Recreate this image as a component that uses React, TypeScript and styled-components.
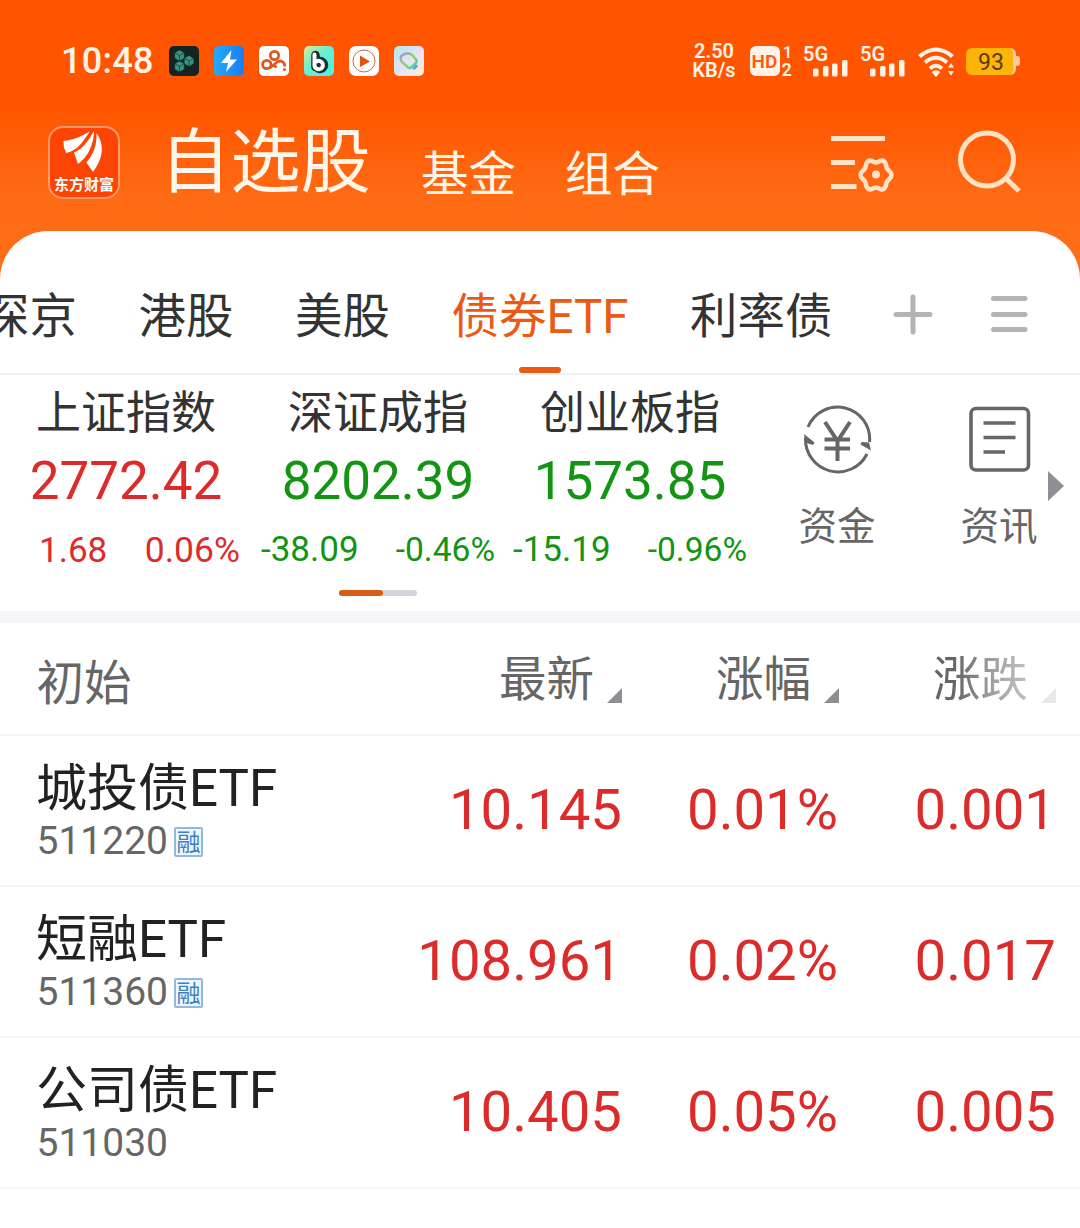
import React from "react";
import styled, { createGlobalStyle } from "styled-components";

const Global = createGlobalStyle`
  * { box-sizing: border-box; }
  body {
    margin: 0;
    background: #fff;
    font-family: Roboto, "Noto Sans CJK SC", sans-serif;
    color: #333;
  }
`;

const RED = "#dc2b2b";
const GREEN = "#139413";

const Screen = styled.div`
  width: 1080px;
  height: 1228px;
  overflow: hidden;
  background: linear-gradient(#ff5500 0, #ff5500 105px, #ff6b15 200px, #ff6e18 280px);
`;

/* ---------- status bar ---------- */

const StatusBar = styled.div`
  display: flex;
  justify-content: space-between;
  align-items: center;
  height: 96px;
  padding: 26px 60px 0 61px;
  color: #fff3e8;
`;

const StatusGroup = styled.div<{ $gap: number }>`
  display: flex;
  align-items: center;
  gap: ${(p) => p.$gap}px;
`;

const Clock = styled.span`
  width: 93px;
  font-size: 36px;
  line-height: 40px;
  font-weight: 500;
  letter-spacing: 0.3px;
`;

const Speed = styled.div`
  width: 44px;
  text-align: center;
  font-size: 20px;
  line-height: 19px;
  font-weight: 600;
  white-space: nowrap;
`;

const AppIcon = styled.svg`
  width: 30px;
  height: 30px;
  display: block;
`;

const Battery = styled.div`
  display: flex;
  align-items: center;
`;

const BatteryBody = styled.div`
  width: 50px;
  height: 27px;
  padding-left: 3px;
  border-radius: 6px;
  border-right: 3px solid #ffc9a0;
  background: #fbb408;
  color: #5b3c00;
  font-size: 23px;
  line-height: 29px;
  text-align: center;
`;

const BatteryTip = styled.div`
  width: 4px;
  height: 10px;
  border-radius: 0 3px 3px 0;
  background: #ffc9a0;
`;

/* ---------- title bar ---------- */

const TitleBar = styled.div`
  display: flex;
  align-items: flex-start;
  height: 135px;
  padding-left: 48px;
`;

const Logo = styled.div`
  width: 72px;
  height: 73px;
  margin-top: 30px;
  border: 2px solid #ff9a6c;
  border-radius: 15px;
  background: #fc4504;
  display: flex;
  flex-direction: column;
  align-items: center;
`;

const LogoName = styled.span`
  font-family: "Noto Sans CJK SC", sans-serif;
  font-weight: 700;
  font-size: 15px;
  line-height: 16px;
  color: #fff;
  white-space: nowrap;
`;

const TitleText = styled.span<{ $size: number; $left: number; $top: number }>`
  margin: ${(p) => p.$top}px 0 0 ${(p) => p.$left}px;
  font-size: ${(p) => p.$size}px;
  line-height: 80px;
  color: #fff6ea;
  white-space: nowrap;
`;

const TitleIcons = styled.div`
  display: flex;
  margin: 30px 0 0 auto;
  padding-right: 50px;
`;

/* ---------- white sheet ---------- */

const Sheet = styled.main`
  height: 997px;
  background: #fff;
  border-radius: 48px 48px 0 0;
  overflow: hidden;
`;

const Tabs = styled.nav`
  display: flex;
  height: 144px;
  padding-top: 55px;
  margin-left: -18px;
  border-bottom: 2px solid #f2f2f2;
`;

const Tab = styled.div<{ $active?: boolean }>`
  display: flex;
  flex-direction: column;
  align-items: center;
  justify-content: space-between;
  flex-shrink: 0;
  margin-right: 61.5px;
  font-size: 47.5px;
  line-height: 62px;
  white-space: nowrap;
  color: ${(p) => (p.$active ? "#ea5a12" : "#333")};
`;

const TabMark = styled.i`
  width: 42px;
  height: 6px;
  border-radius: 3px;
  background: #ea5a12;
`;

const TabTools = styled.svg`
  display: block;
  flex-shrink: 0;
  width: 140px;
  height: 60px;
  margin: -1px 0 0 -4.5px;
`;

const Quotes = styled.section`
  display: flex;
  height: 236px;
`;

const Indices = styled.div`
  width: 756px;
`;

const IndexRow = styled.div`
  display: flex;
`;

const IndexCell = styled.div`
  width: 252px;
  display: flex;
  flex-direction: column;
  align-items: center;
`;

const IndexName = styled.div`
  height: 72px;
  font-size: 45px;
  line-height: 77px;
`;

const IndexValue = styled.div<{ $color: string }>`
  height: 70px;
  font-size: 53px;
  line-height: 68px;
  color: ${(p) => p.$color};
`;

const Deltas = styled.div<{ $color: string; $up?: boolean }>`
  display: flex;
  justify-content: space-between;
  width: 252px;
  padding: ${(p) => (p.$up ? "1px 12px 0 39px" : "0 9px 0 9px")};
  font-size: 35px;
  line-height: 66px;
  height: 66px;
  color: ${(p) => p.$color};
`;

const Percent = styled.span<{ $up?: boolean }>`
  font-size: ${(p) => (p.$up ? 35.5 : 33.6)}px;
  line-height: 65px;
`;

const Pager = styled.div`
  width: 78px;
  height: 6px;
  margin: 7px auto 0;
  border-radius: 3px;
  background: #d2d6da;
`;

const PagerOn = styled.div`
  width: 44px;
  height: 6px;
  border-radius: 3px;
  background: #d85c16;
`;

const Shortcut = styled.div`
  width: 162px;
  display: flex;
  flex-direction: column;
  align-items: center;
  font-size: 38.5px;
  line-height: 50px;
  color: #666;
`;

const ShortcutIcon = styled.svg`
  display: block;
  width: 72px;
  height: 72px;
  margin: 29px 0 26px;
`;

const More = styled.svg`
  position: absolute;
  left: 1048px;
  top: 471px;
  width: 17px;
  height: 30px;
`;

const Band = styled.div`
  height: 12px;
  background: #f5f6fa;
`;

/* ---------- table ---------- */

const Row = styled.div<{ $height: number }>`
  display: grid;
  grid-template-columns: 324px 300px 216px 240px;
  height: ${(p) => p.$height}px;
  border-bottom: 2px solid #f5f5f5;
`;

const HeadFirst = styled.div`
  height: 111px;
  padding-left: 36.5px;
  font-size: 47.5px;
  line-height: 123px;
  color: #666;
`;

const Head = styled.div<{ $right: number; $fade?: boolean }>`
  display: flex;
  justify-content: flex-end;
  height: 111px;
  padding-right: ${(p) => p.$right}px;
  font-size: 47.5px;
  line-height: 115px;
  color: #666;
  ${(p) =>
    p.$fade &&
    "mask-image: linear-gradient(90deg, #000 115px, rgba(0,0,0,.6) 155px, rgba(0,0,0,.42) 185px, rgba(0,0,0,.2) 205px);"}
`;

const SortMark = styled.i`
  width: 0;
  height: 0;
  margin: 65px 0 0 13px;
  border-left: 15px solid transparent;
  border-bottom: 15px solid #8e8e93;
`;

const Security = styled.div`
  padding-left: 36px;
  padding-top: 22px;
`;

const Name = styled.div`
  font-size: 51px;
  line-height: 62px;
  height: 61px;
  color: #222;
`;

const CodeLine = styled.div`
  display: flex;
  align-items: center;
  height: 44px;
  padding-left: 0.5px;
  font-size: 39px;
  line-height: 44px;
  color: #666;
`;

const Badge = styled.span`
  width: 29px;
  height: 30px;
  margin: 1px 0 0 6px;
  border: 2px solid #94b8dc;
  border-radius: 2px;
  background: #eef7fd;
  color: #3f7fc0;
  font-size: 24px;
  line-height: 28px;
  display: flex;
  justify-content: center;
`;

const Figure = styled.div<{ $right?: number }>`
  padding-right: ${(p) => p.$right ?? 2}px;
  text-align: right;
  font-size: 56.3px;
  line-height: 149px;
  color: ${RED};
`;

const indices = [
  { name: "上证指数", value: "2772.42", delta: "1.68", pct: "0.06%", up: true },
  { name: "深证成指", value: "8202.39", delta: "-38.09", pct: "-0.46%", up: false },
  { name: "创业板指", value: "1573.85", delta: "-15.19", pct: "-0.96%", up: false },
];

const rows = [
  { name: "城投债ETF", code: "511220", margin: true, last: "10.145", pct: "0.01%", chg: "0.001" },
  { name: "短融ETF", code: "511360", margin: true, last: "108.961", pct: "0.02%", chg: "0.017" },
  { name: "公司债ETF", code: "511030", margin: false, last: "10.405", pct: "0.05%", chg: "0.005" },
];

const Hex = ({ x, y }: { x: number; y: number }) => (
  <g transform={`translate(${x} ${y})`} stroke="#14302b" strokeWidth=".7">
    <path d="M0-5.6 4.8-2.8V2.8L0 5.6-4.8 2.8V-2.8Z" fill="#3b9584" />
    <path d="M-4.8-2.8 0 0 4.8-2.8M0 0V5.6" fill="none" />
  </g>
);

function StatusApps() {
  return (
    <StatusGroup $gap={15}>
      <AppIcon viewBox="0 0 30 30">
        <rect width="30" height="30" rx="5" fill="#17231f" />
        <Hex x={10.5} y={9.5} />
        <Hex x={20} y={15} />
        <Hex x={10.5} y={20.5} />
      </AppIcon>
      <AppIcon viewBox="0 0 30 30">
        <defs>
          <linearGradient id="bolt">
            <stop stopColor="#25a9fa" />
            <stop offset="1" stopColor="#1a7df2" />
          </linearGradient>
        </defs>
        <rect width="30" height="30" rx="5" fill="url(#bolt)" />
        <path d="M17.5 4 7 17h7l-2 9L23 13.500h-7Z" fill="#fff" />
      </AppIcon>
      <AppIcon viewBox="0 0 30 30">
        <rect width="30" height="30" rx="5" fill="#fff" />
        <g fill="none" stroke="#e2571c" strokeWidth="2.800">
          <circle cx="15.500" cy="9.500" r="4.200" />
          <circle cx="7.800" cy="18.500" r="4.200" />
          <path d="M11 22 17.500 16.500Q21.500 13.500 24.500 16.500Q26 18 25.500 20.500M14.500 19l3 2.500" />
        </g>
        <circle cx="25.500" cy="23.500" r="1.500" fill="#e2571c" />
      </AppIcon>
      <AppIcon viewBox="0 0 30 30">
        <defs>
          <linearGradient id="mint" x2="1" y2="1">
            <stop stopColor="#d9ec9a" />
            <stop offset=".45" stopColor="#6beed0" />
            <stop offset="1" stopColor="#45f3ea" />
          </linearGradient>
        </defs>
        <rect width="30" height="30" rx="5" fill="url(#mint)" />
        <g fill="none" strokeLinecap="round" strokeLinejoin="round">
          <path d="M11.500 9V21M12 19a4 4 0 1 0 2-3.500" stroke="#16302f" strokeWidth="8.500" />
          <path d="M10.500 8.500V20M10.500 19a4.200 4.200 0 1 0 2-3.500" stroke="#fff" strokeWidth="4" />
        </g>
      </AppIcon>
      <AppIcon viewBox="0 0 30 30">
        <rect width="30" height="30" rx="7" fill="#fff" />
        <circle cx="15" cy="15" r="11" fill="none" stroke="#bd704a" strokeWidth="1" />
        <path d="M11 9.500 21 15.500 11 21Z" fill="#e8500f" />
      </AppIcon>
      <AppIcon viewBox="0 0 30 30">
        <defs>
          <linearGradient id="pastel" x2="1" y2="1">
            <stop stopColor="#a9ecec" />
            <stop offset=".5" stopColor="#e6e2f7" />
            <stop offset="1" stopColor="#fdf0d0" />
          </linearGradient>
          <linearGradient id="rainbow" y2="1">
            <stop stopColor="#b58be8" />
            <stop offset=".5" stopColor="#8fdc5a" />
            <stop offset="1" stopColor="#45c0d8" />
          </linearGradient>
        </defs>
        <rect width="30" height="30" rx="5" fill="url(#pastel)" />
        <path d="M9.500 8.500q5-2.500 8.500.5l4 4.500q1.500 2-.5 4l-4 3.500q-2 2-4 0l-6-5.500q-2.500-5 2-7Z" fill="none" stroke="url(#rainbow)" strokeWidth="2.500" />
        <path d="m20 22.500 2.500-2.500" stroke="#3db5c8" strokeWidth="2.500" strokeLinecap="round" />
      </AppIcon>
    </StatusGroup>
  );
}

const Network = styled.svg`
  display: block;
  width: 205px;
  height: 36px;
  margin: 0 12px 0 13px;
`;

const SvgText = styled.text<{ $size: number }>`
  font-family: Roboto, sans-serif;
  font-weight: 600;
  font-size: ${(p) => p.$size}px;
`;

const Signal = ({ x }: { x: number }) => (
  <g fill="#fff3e8">
    <SvgText $size={20} x={x} y="17.500">5G</SvgText>
    <rect x={x + 10} y="25.500" width="5.500" height="8" rx="1.500" />
    <rect x={x + 20} y="23" width="5.500" height="10.500" rx="1.500" />
    <rect x={x + 29} y="20.500" width="5.500" height="13" rx="1.500" />
    <rect x={x + 39} y="17" width="5.500" height="16.500" rx="1.500" />
  </g>
);

function NetworkIcons() {
  return (
    <Network viewBox="0 0 205 36" fill="#fff3e8">
      <rect x="1" y="3" width="30" height="30" rx="6" />
      <SvgText $size={19} x="2.500" y="25" fill="#ff5a08">HD</SvgText>
      <SvgText $size={16} x="34" y="14.500">1</SvgText>
      <SvgText $size={18} x="32.500" y="32.500">2</SvgText>
      <Signal x={54} />
      <Signal x={111} />
      <g fill="none" stroke="#fff3e8" strokeWidth="4">
        <path d="M170.500 13.500Q187 -.5 203.500 13.500" />
        <path d="M176 19.500Q187 10 198 19.500" />
        <path d="M181 25.500Q187 20 193 25.500" />
      </g>
      <path d="M182.500 29q4.500-3.500 9 0l-4.500 5ZM199 24.500l3-4.500 3 4.500ZM199 28h6l-3 4.500Z" />
    </Network>
  );
}

export default function App() {
  return (
    <Screen>
      <Global />
      <StatusBar>
        <StatusGroup $gap={15}>
          <Clock>10:48</Clock>
          <StatusApps />
        </StatusGroup>
        <StatusGroup $gap={0}>
          <Speed>2.50<br />KB/s</Speed>
          <NetworkIcons />
          <Battery>
            <BatteryBody>93</BatteryBody>
            <BatteryTip />
          </Battery>
        </StatusGroup>
      </StatusBar>

      <TitleBar>
        <Logo>
          <svg width="68" height="48" viewBox="0 0 68 48" fill="#fff">
            <path d="M40 3.500C29 9 24 12 13.500 13Q13 19 16 25C29 22 32 14 40 3.500Z" />
            <path d="M44 3C38 13 34 20 24 24.500L28 36C38 29 44 16 44 3Z" />
            <path d="M46.500 5C47 18 43 27 36.500 34.500L43 44C53 31 55 17 46.500 5Z" />
          </svg>
          <LogoName>东方财富</LogoName>
        </Logo>
        <TitleText $size={70.3} $left={40} $top={27}>自选股</TitleText>
        <TitleText $size={47.5} $left={50} $top={39}>基金</TitleText>
        <TitleText $size={47.5} $left={49} $top={39}>组合</TitleText>
        <TitleIcons>
          <svg width="200" height="80" viewBox="0 0 200 80" fill="none" stroke="#ffe2c6" strokeWidth="5">
            <path d="M1 12.500H55M1 36.500H25M1 60.500H26.500" />
            <path d="M39.500 34.500C42 34 43.500 36.500 46 36.500S50 34 52.500 34.500C57 36 55.500 40 57 42.500S61.500 45.500 61.500 49S58.500 53 57 55.500S57 62 52.500 63.500C50 64 48.500 61.500 46 61.500S42 64 39.500 63.500C35 62 36.500 58 35 55.500S30.500 52.500 30.500 49S33.500 45 35 42.500S35 36 39.500 34.500Z" strokeWidth="4.500" />
            <circle cx="46" cy="48.500" r="4" fill="#ffe2c6" stroke="none" />
            <circle cx="157" cy="33.500" r="26.500" />
            <path d="M176 52.500 189 65" />
          </svg>
        </TitleIcons>
      </TitleBar>

      <Sheet>
        <Tabs>
          <Tab>深京</Tab>
          <Tab>港股</Tab>
          <Tab>美股</Tab>
          <Tab $active>债券ETF<TabMark /></Tab>
          <Tab>利率债</Tab>
          <TabTools viewBox="0 0 140 60" stroke="#b3b3b3" strokeWidth="5" strokeLinecap="round">
            <path d="M6 29.500H40M23 12V47" />
            <path d="M103.500 13.500H135M103.500 29.500H135M103.500 44.500H135" />
          </TabTools>
        </Tabs>

        <Quotes>
          <Indices>
            <IndexRow>
              {indices.map((i) => (
                <IndexCell key={i.name}>
                  <IndexName>{i.name}</IndexName>
                  <IndexValue $color={i.up ? RED : GREEN}>{i.value}</IndexValue>
                  <Deltas $color={i.up ? RED : GREEN} $up={i.up}>
                    <span>{i.delta}</span>
                    <Percent $up={i.up}>{i.pct}</Percent>
                  </Deltas>
                </IndexCell>
              ))}
            </IndexRow>
            <Pager><PagerOn /></Pager>
          </Indices>
          <Shortcut>
            <ShortcutIcon viewBox="0 0 72 72" fill="none" stroke="#666" strokeWidth="3">
              <path d="M7 23A32 32 0 0 1 68.500 38" />
              <path d="M66 50A32.500 32.500 0 0 1 4.500 34" />
              <path d="M3 30 13.500 38.500 12 41 4 38.500ZM70 46.500 59.500 40.500 60.500 38 68 38.500Z" fill="#666" stroke="none" />
              <path d="M24 18 36.500 37 49 18M23.500 35.500H49M23.500 44.500H49M36.500 36V57" strokeWidth="4" />
            </ShortcutIcon>
            资金
          </Shortcut>
          <Shortcut>
            <ShortcutIcon viewBox="0 0 72 72" fill="none" stroke="#666" strokeWidth="3.600">
              <rect x="8" y="4.500" width="57.500" height="61.500" rx="5" />
              <path d="M20.500 19H52.500M20.500 33.500H52.500M20.500 48H42" />
            </ShortcutIcon>
            资讯
          </Shortcut>
          <More viewBox="0 0 17 30"><path d="M0 0 16 15 0 30Z" fill="#8e8e93" /></More>
        </Quotes>
        <Band />

        <Row $height={113}>
          <HeadFirst>初始</HeadFirst>
          <Head $right={2}>最新<SortMark /></Head>
          <Head $right={1}>涨幅<SortMark /></Head>
          <Head $right={24} $fade>涨跌<SortMark /></Head>
        </Row>
        {rows.map((r) => (
          <Row key={r.code} $height={151}>
            <Security>
              <Name>{r.name}</Name>
              <CodeLine>
                {r.code}
                {r.margin && <Badge>融</Badge>}
              </CodeLine>
            </Security>
            <Figure>{r.last}</Figure>
            <Figure>{r.pct}</Figure>
            <Figure $right={24}>{r.chg}</Figure>
          </Row>
        ))}
      </Sheet>
    </Screen>
  );
}
